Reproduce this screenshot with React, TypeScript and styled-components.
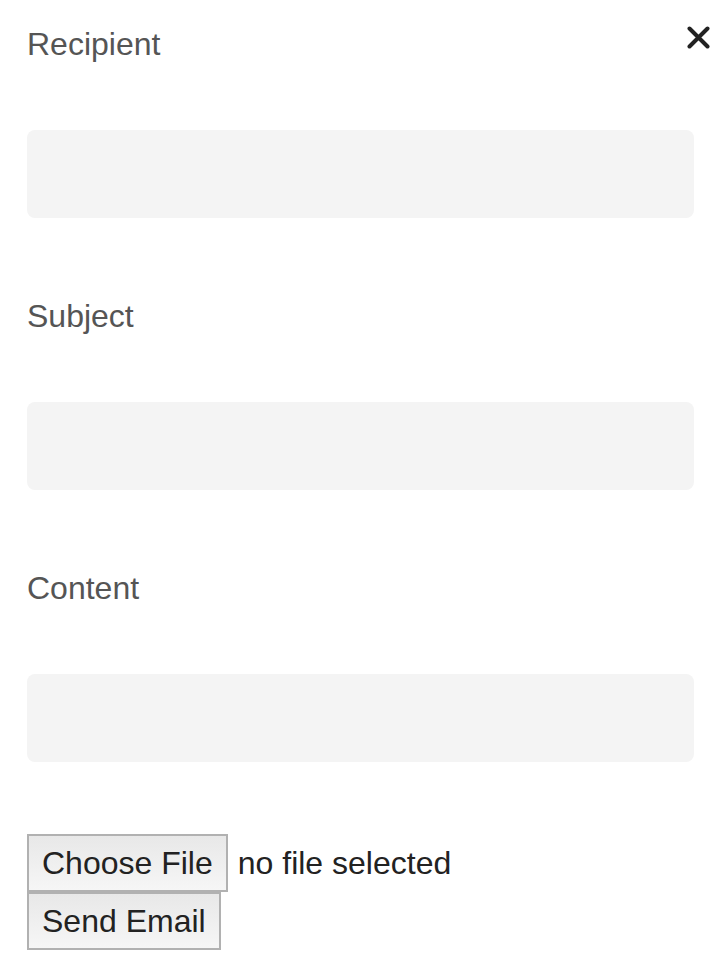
import { createGlobalStyle } from "styled-components";
import styled from "styled-components";

const GlobalStyle = createGlobalStyle`
  html, body {
    margin: 0;
    padding: 0;
    background: #fff;
  }
  body {
    font-family: "Liberation Sans", Arial, Helvetica, sans-serif;
  }
`;

const Panel = styled.form`
  position: relative;
  box-sizing: border-box;
  width: 726px;
  min-height: 974px;
  padding: 26px 32px 0 27px;
  display: flex;
  flex-direction: column;
`;

const CloseButton = styled.button`
  position: absolute;
  top: 26px;
  right: 16px;
  width: 23px;
  height: 23px;
  padding: 0;
  border: none;
  background: transparent;
  cursor: pointer;
  display: flex;
  align-items: center;
  justify-content: center;
`;

const Field = styled.div<{ $last?: boolean }>`
  display: flex;
  flex-direction: column;
  margin-bottom: ${(p) => (p.$last ? "72px" : "80px")};
`;

const Label = styled.label`
  font-size: 32px;
  line-height: 36px;
  color: #555;
  margin-bottom: 68px;
`;

const TextInput = styled.input`
  box-sizing: border-box;
  height: 88px;
  width: 100%;
  border: none;
  border-radius: 8px;
  background: #f4f4f4;
  padding: 0 16px;
  font-family: inherit;
  font-size: 32px;
  color: #222;
  outline: none;
`;

const FileRow = styled.div`
  display: flex;
  align-items: center;
  gap: 10px;
`;

const Button = styled.button`
  box-sizing: border-box;
  height: 58px;
  padding: 0 13px;
  border: 2px solid #b1b1b1;
  border-radius: 0;
  background: linear-gradient(#e8e8e8, #f6f6f6);
  font-family: inherit;
  font-size: 32px;
  color: #222;
  cursor: pointer;
  align-self: flex-start;
`;

const FileStatus = styled.span`
  font-size: 32px;
  color: #222;
`;

const Fields = [
  { id: "recipient", label: "Recipient" },
  { id: "subject", label: "Subject" },
  { id: "content", label: "Content" },
];

export default function App() {
  return (
    <>
      <GlobalStyle />
      <Panel onSubmit={(e) => e.preventDefault()}>
        <CloseButton type="button" aria-label="Close">
          <svg width="23" height="23" viewBox="0 0 23 23">
            <path
              d="M2.5 2.5 L20.5 20.5 M20.5 2.5 L2.5 20.5"
              stroke="#222"
              strokeWidth="4"
              strokeLinecap="round"
            />
          </svg>
        </CloseButton>
        {Fields.map((f, i) => (
          <Field key={f.id} $last={i === Fields.length - 1}>
            <Label htmlFor={f.id}>{f.label}</Label>
            <TextInput id={f.id} type="text" />
          </Field>
        ))}
        <FileRow>
          <Button type="button">Choose File</Button>
          <FileStatus>no file selected</FileStatus>
        </FileRow>
        <Button type="submit">Send Email</Button>
      </Panel>
    </>
  );
}
